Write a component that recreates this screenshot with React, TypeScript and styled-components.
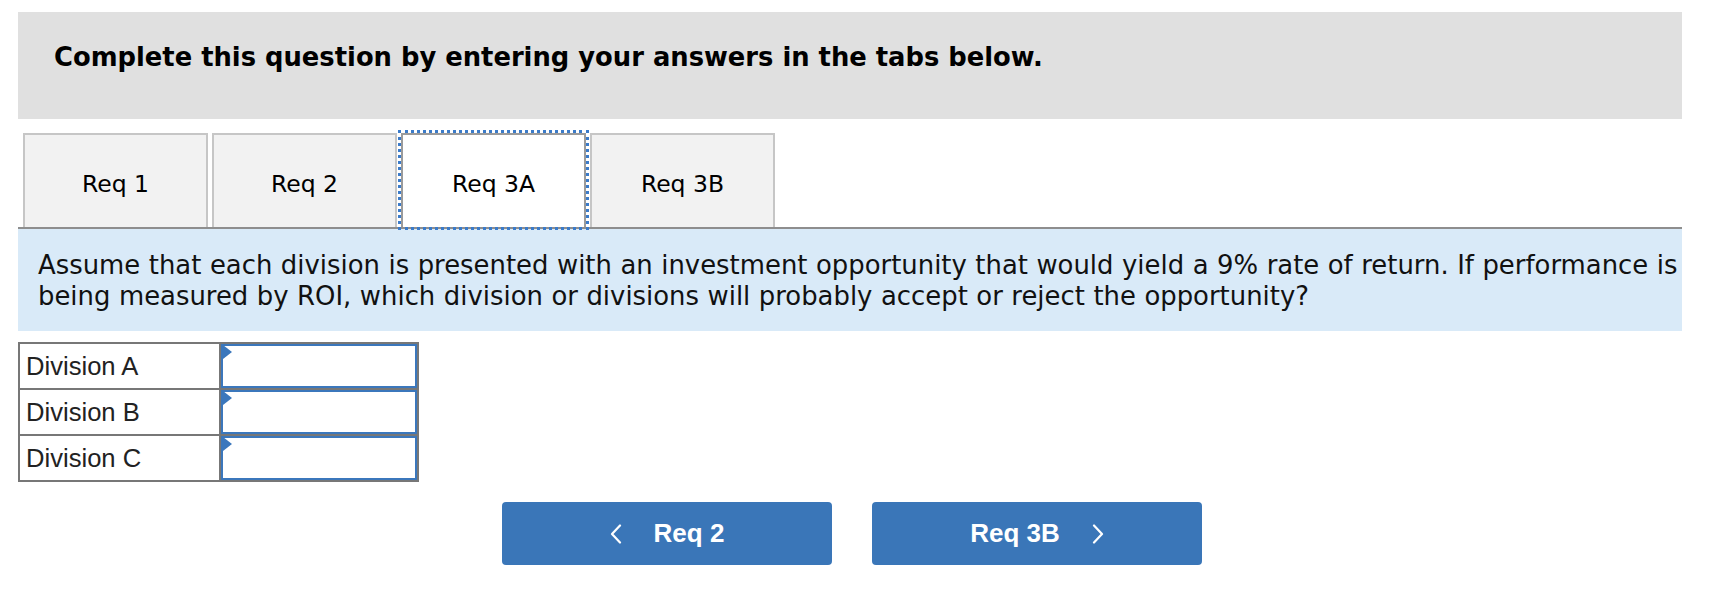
import React from "react";
import styled, { createGlobalStyle } from "styled-components";

const GlobalStyle = createGlobalStyle`
  html, body { margin: 0; padding: 0; background: #fff; }
  body { font-family: "DejaVu Sans", Verdana, sans-serif; }
`;

const Page = styled.div`
  width: 1664px;
  padding: 12px 0 0 18px;
`;

const Header = styled.div`
  box-sizing: border-box;
  height: 107px;
  background: #e0e0e0;
  padding: 30px 0 0 36px;
  font-family: "DejaVu Sans", Verdana, sans-serif;
  font-weight: bold;
  font-size: 25.8px;
  line-height: 30px;
  color: #000;
`;

const TabBar = styled.div`
  display: flex;
  gap: 4px;
  margin-top: 14px;
  padding-left: 5px;
  border-bottom: 2px solid #8e8e8e;
`;

const Tab = styled.div<{ $active?: boolean }>`
  box-sizing: border-box;
  width: 185px;
  height: 94px;
  padding-top: 6px;
  display: flex;
  align-items: center;
  justify-content: center;
  background: ${(p) => (p.$active ? "#fff" : "#f2f2f2")};
  border: 2px solid ${(p) => (p.$active ? "#9b9b9b" : "#c6c6c6")};
  border-bottom: none;
  font-family: "DejaVu Sans", Verdana, sans-serif;
  font-size: 23.5px;
  color: #000;
  ${(p) => (p.$active ? "outline: 3px dotted #3b7bc9; outline-offset: 0;" : "")}
`;

const Prompt = styled.div`
  box-sizing: border-box;
  height: 102px;
  background: #d9eaf8;
  padding: 21px 0 0 20px;
  font-family: "DejaVu Sans", Verdana, sans-serif;
  font-size: 25.9px;
  line-height: 31px;
  word-spacing: 0.3px;
  color: #111;
  white-space: nowrap;
  overflow: hidden;
`;

const AnswerTable = styled.div`
  display: grid;
  grid-template-columns: 199px 196px;
  grid-auto-rows: 44px;
  gap: 2px;
  width: max-content;
  margin-top: 11px;
  border: 2px solid #777;
  background: #777;
`;

const LabelCell = styled.div`
  display: flex;
  align-items: center;
  padding-left: 6px;
  background: #fff;
  font-family: "Liberation Sans", Arial, sans-serif;
  font-size: 25.6px;
  color: #222;
`;

const InputCell = styled.div`
  position: relative;
  background: #fff;
`;

const AnswerInput = styled.input`
  box-sizing: border-box;
  display: block;
  width: 100%;
  height: 100%;
  margin: 0;
  border: 2px solid #3b77bc;
  background: #fff;
  outline: none;
`;

const Marker = styled.span`
  position: absolute;
  left: 2px;
  top: 1px;
  width: 0;
  height: 0;
  border-top: 7px solid transparent;
  border-bottom: 7px solid transparent;
  border-left: 9px solid #3b77bc;
`;

const NavRow = styled.div`
  display: flex;
  justify-content: center;
  gap: 40px;
  margin-top: 20px;
  padding-left: 4px;
`;

const NavButton = styled.button`
  box-sizing: border-box;
  width: 330px;
  height: 63px;
  display: flex;
  align-items: center;
  justify-content: center;
  gap: 32px;
  border: none;
  border-radius: 4px;
  background: #3a76b8;
  color: #fff;
  font-family: "Liberation Sans", Arial, sans-serif;
  font-weight: bold;
  font-size: 26px;
  padding: 0;
  cursor: pointer;
`;

const Chevron = ({ dir }: { dir: "left" | "right" }) => (
  <svg width="12" height="20" viewBox="0 0 12 20" aria-hidden="true">
    <polyline
      points={dir === "left" ? "10,1.5 2,10 10,18.5" : "2,1.5 10,10 2,18.5"}
      fill="none"
      stroke="#fff"
      strokeWidth="2.2"
      strokeLinecap="round"
      strokeLinejoin="round"
    />
  </svg>
);

const divisions = ["Division A", "Division B", "Division C"];

export default function App() {
  return (
    <>
      <GlobalStyle />
      <Page>
        <Header>Complete this question by entering your answers in the tabs below.</Header>
        <TabBar>
          <Tab>Req 1</Tab>
          <Tab>Req 2</Tab>
          <Tab $active>Req 3A</Tab>
          <Tab>Req 3B</Tab>
        </TabBar>
        <Prompt>
          Assume that each division is presented with an investment opportunity that would yield a 9% rate of return. If performance is
          <br />
          being measured by ROI, which division or divisions will probably accept or reject the opportunity?
        </Prompt>
        <AnswerTable>
          {divisions.map((d) => (
            <React.Fragment key={d}>
              <LabelCell>{d}</LabelCell>
              <InputCell>
                <AnswerInput aria-label={d} />
                <Marker />
              </InputCell>
            </React.Fragment>
          ))}
        </AnswerTable>
        <NavRow>
          <NavButton>
            <Chevron dir="left" />
            <span>Req 2</span>
          </NavButton>
          <NavButton>
            <span>Req 3B</span>
            <Chevron dir="right" />
          </NavButton>
        </NavRow>
      </Page>
    </>
  );
}
